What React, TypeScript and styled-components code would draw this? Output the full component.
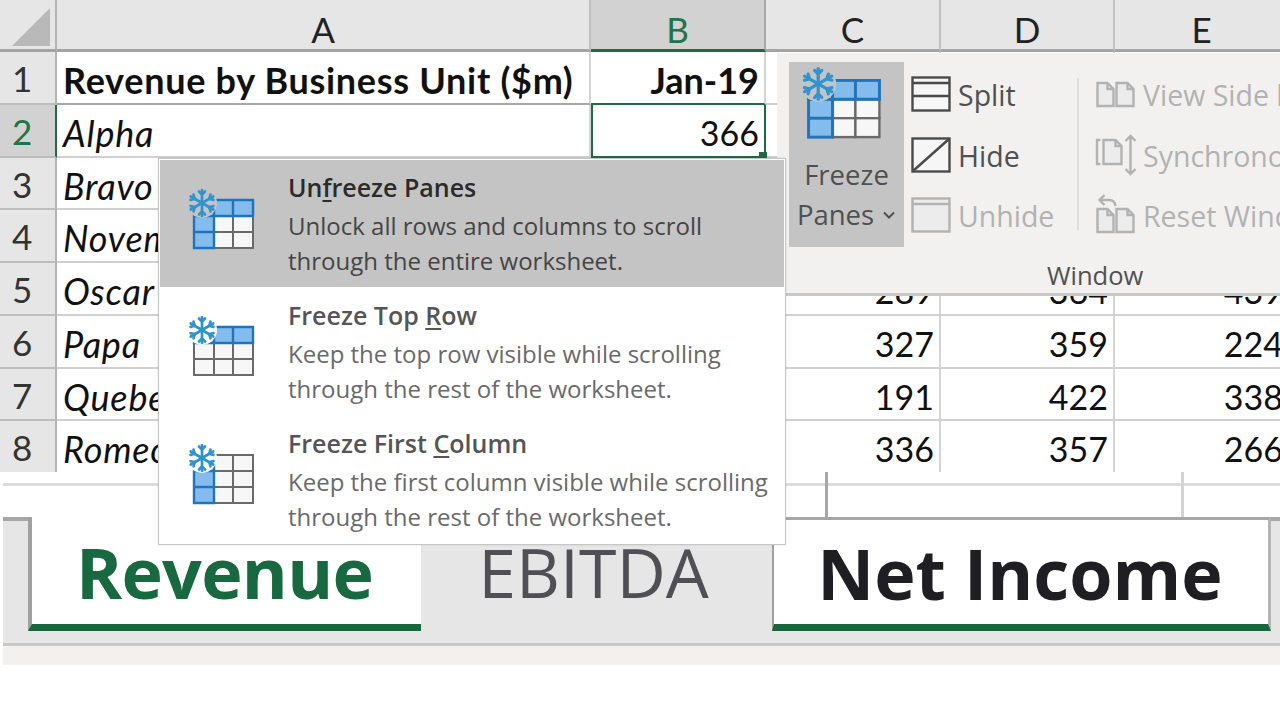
import React from "react";
import styled, { createGlobalStyle } from "styled-components";

const Global = createGlobalStyle`
  html, body { margin: 0; padding: 0; background: #fff; overflow: hidden; }
  body { width: 1280px; height: 720px; position: relative; font-family: Lato, "Liberation Sans", sans-serif; }
  * { box-sizing: border-box; }
`;

const Page = styled.div`
  position: relative;
  width: 1280px;
  height: 720px;
  overflow: hidden;
  background: #fff;
`;

const Sheet = styled.div`
  display: grid;
  grid-template-columns: 57px 534px 175px 175px 174px 175px;
  grid-template-rows: 52px 53px 53px 52px 53px 53px 53px 52px 54px;
  width: 1290px;
  height: 472px;
  overflow: hidden;
  font-family: Lato, "Liberation Sans", sans-serif;
`;

const Corner = styled.div`
  background: #e6e6e6;
  border-right: 2px solid #b4b4b4;
  border-bottom: 3px solid #a3a3a3;
  display: flex;
  align-items: flex-start;
  justify-content: flex-end;
  padding: 8px 5px 0 0;
`;

const ColHead = styled.div<{ $active?: boolean }>`
  background: ${(p) => (p.$active ? "#d2d2d2" : "#e6e6e6")};
  color: ${(p) => (p.$active ? "#20744a" : "#222")};
  border-right: 2px solid ${(p) => (p.$active ? "#a8a8a8" : "#c0c0c0")};
  border-bottom: 3px solid ${(p) => (p.$active ? "#1d6b41" : "#a3a3a3")};
  font-size: 35px;
  line-height: 58px;
  text-align: center;
`;

const RowHead = styled.div<{ $active?: boolean }>`
  background: ${(p) => (p.$active ? "#d2d2d2" : "#e6e6e6")};
  color: ${(p) => (p.$active ? "#20744a" : "#333")};
  border-right: 2px solid ${(p) => (p.$active ? "#1d6b41" : "#b4b4b4")};
  border-bottom: 2px solid #bdbdbd;
  font-size: 35px;
  line-height: 52px;
  padding-left: 12px;
`;

const Cell = styled.div<{ $right?: boolean; $bold?: boolean; $italic?: boolean; $line?: string }>`
  background: #fff;
  color: #111;
  border-right: 2px solid #d4d4d4;
  border-bottom: 2px solid ${(p) => p.$line || "#d0d0d0"};
  font-size: ${(p) => (p.$bold || p.$italic ? 36 : 34)}px;
  line-height: ${(p) => (p.$bold || p.$italic ? 57 : 55)}px;
  font-weight: ${(p) => (p.$bold ? 700 : 400)};
  font-style: ${(p) => (p.$italic ? "italic" : "normal")};
  letter-spacing: ${(p) => (p.$italic ? "0.8px" : p.$bold && !p.$right ? "0.7px" : "0")};
  text-align: ${(p) => (p.$right ? "right" : "left")};
  padding: 0 5px 0 6px;
  white-space: nowrap;
  overflow: hidden;
`;

const SelectedCell = styled(Cell)`
  position: relative;
  overflow: visible;
  border: 2px solid #1d6b41;
  border-top: none;
  padding-right: 5px;
`;

const FillHandle = styled.span`
  position: absolute;
  right: -3px;
  bottom: -2px;
  width: 8px;
  height: 6px;
  background: #1d6b41;
`;

const Strip = styled.div`
  margin-left: 3px;
  width: 1277px;
  background: #fff;
`;

const GhostCells = styled.div`
  display: grid;
  grid-template-columns: 825px 356px 1fr;
  height: 45px;
  background: linear-gradient(#fff 0 11px, #dcdcdc 11px 14px, #fff 14px);
`;

const GhostCell = styled.div<{ $dark?: boolean }>`
  border-right: 3px solid ${(p) => (p.$dark ? "#a6a6a6" : "#d4d4d4")};
  &:last-child { border-right: none; }
`;

const TabRow = styled.div`
  display: flex;
  height: 114px;
  background: #e6e6e6;
`;

const TabGap = styled.div<{ $w: number; $top?: boolean }>`
  width: ${(p) => p.$w}px;
  flex: none;
  border-top: ${(p) => (p.$top ? "4px solid #a6a6a6" : "none")};
`;

const Tab = styled.div<{ $w: number; $left?: number; $topLine?: boolean; $right?: boolean; $tone: string; $bold?: boolean; $plain?: boolean; $track?: number }>`
  width: ${(p) => p.$w}px;
  flex: none;
  display: flex;
  align-items: center;
  justify-content: center;
  background: ${(p) => (p.$plain ? "#e6e6e6" : "#fff")};
  border-left: ${(p) => (p.$left ? `${p.$left}px solid #a0a0a0` : "none")};
  border-right: ${(p) => (p.$right ? "3px solid #b4b4b4" : "none")};
  border-top: ${(p) => (p.$topLine ? "3px solid #a6a6a6" : "none")};
  border-bottom: 7px solid ${(p) => (p.$plain ? "#e6e6e6" : "#17663d")};
  color: ${(p) => p.$tone};
  font-family: "Open Sans", "Noto Sans", sans-serif;
  font-size: ${(p) => (p.$plain ? 68 : 70)}px;
  font-weight: ${(p) => (p.$bold ? 700 : 400)};
  letter-spacing: ${(p) => p.$track || 0}px;
  line-height: 1;
  white-space: nowrap;
`;

const TabLabel = styled.span<{ $shift: number }>`
  filter: blur(0.6px);
  transform: translate(${(p) => p.$shift}px, 1px);
`;

const StripFoot = styled.div`
  height: 34px;
  background: #f2f1f0;
  border-top: 12px solid #e6e6e6;
  box-shadow: inset 0 3px 0 #c8c8c8;
`;

const Ribbon = styled.div`
  position: absolute;
  left: 777px;
  top: 53px;
  width: 636px;
  height: 243px;
  background: #f2f1f0;
  border-bottom: 3px solid #c8c8c8;
  padding: 9px 0 0 12px;
  font-family: "Open Sans", "Noto Sans", sans-serif;
  color: #505050;
`;

const RibbonBody = styled.div`
  display: flex;
  height: 185px;
`;

const BigButton = styled.div`
  width: 115px;
  height: 185px;
  flex: none;
  background: #c4c4c4;
  display: flex;
  flex-direction: column;
  align-items: center;
  padding-top: 3px;
  font-size: 27.5px;
  line-height: 40px;
  color: #505050;
`;

const BigIconSlot = styled.div`
  height: 90px;
  width: 100%;
  padding-left: 10px;
`;

const BigLine = styled.div`
  display: flex;
  align-items: center;
  gap: 8px;
  white-space: nowrap;
`;

const SmallColumn = styled.div<{ $wide?: boolean }>`
  display: flex;
  flex-direction: column;
  margin-left: ${(p) => (p.$wide ? 0 : 7)}px;
  padding-top: 12px;
  width: ${(p) => (p.$wide ? 420 : 175)}px;
  flex: none;
`;

const SmallRow = styled.div<{ $off?: boolean }>`
  height: 60.5px;
  flex: none;
  display: flex;
  align-items: flex-start;
  gap: 7px;
  font-size: 28.5px;
  line-height: 42px;
  white-space: nowrap;
  color: ${(p) => (p.$off ? "#b2b2b2" : "#505050")};
  svg { flex: none; }
`;

const RibbonSep = styled.div`
  width: 2px;
  height: 152px;
  margin: 16px 16px 0 -9px;
  background: #dfdfdf;
  flex: none;
`;

const GroupLabel = styled.div`
  margin: 9px 0 0 0;
  padding-left: 258px;
  font-size: 25.5px;
  line-height: 38px;
  color: #505050;
`;

const Menu = styled.div`
  position: absolute;
  left: 158px;
  top: 158px;
  width: 628px;
  height: 387px;
  background: #fff;
  border: 1px solid #c6c6c6;
  padding: 1px;
  box-shadow: 0 0 2px rgba(0, 0, 0, 0.12);
  font-family: "Open Sans", "Noto Sans", sans-serif;
`;

const MenuItem = styled.div<{ $hot?: boolean }>`
  height: ${(p) => (p.$hot ? 127 : 128)}px;
  display: flex;
  background: ${(p) => (p.$hot ? "#c4c4c4" : "transparent")};
`;

const MenuIcon = styled.div`
  width: 128px;
  flex: none;
  padding: 27px 0 0 26px;
`;

const MenuText = styled.div<{ $hot?: boolean }>`
  padding-top: ${(p) => (p.$hot ? 10 : 11)}px;
`;

const MenuTitle = styled.div<{ $hot?: boolean }>`
  font-size: 25px;
  line-height: 35px;
  font-weight: 600;
  color: ${(p) => (p.$hot ? "#2b2b2b" : "#555")};
  white-space: nowrap;
  u { text-underline-offset: 3px; text-decoration-thickness: 2px; }
`;

const MenuDesc = styled.div<{ $hot?: boolean }>`
  font-size: 24px;
  line-height: 35px;
  margin-top: 3px;
  color: ${(p) => (p.$hot ? "#454545" : "#6a6a6a")};
  white-space: nowrap;
`;

const Snow: React.FC<{ halo: string }> = ({ halo }) => (
  <g>
    <circle cx="16" cy="16" r="15" fill={halo} />
    {[0, 60, 120, 180, 240, 300].map((a) => (
      <g key={a} transform={`rotate(${a} 16 16)`} stroke="#2f94d0" strokeWidth="2.7" fill="none" strokeLinecap="round">
        <path d="M16 16V3" />
        <path d="M13 4.5L16 7.6L19 4.5" />
      </g>
    ))}
  </g>
);

const Freeze: React.FC<{ mode: "both" | "top" | "left"; halo: string; w?: number; h?: number }> = ({ mode, halo, w = 70, h = 66 }) => {
  const xs = [8, 28, 47, 67];
  const ys = [13, 29, 45, 61];
  const blue = (c: number, r: number) =>
    (mode !== "left" && r === 0) || (mode !== "top" && c === 0);
  const cells: React.ReactNode[] = [];
  for (let r = 0; r < 3; r++)
    for (let c = 0; c < 3; c++)
      cells.push(
        <rect key={`${r}${c}`} x={xs[c]} y={ys[r]} width={xs[c + 1] - xs[c]} height={ys[r + 1] - ys[r]} fill={blue(c, r) ? "#84bdec" : "#f7f7f7"} stroke="#6a6a6a" strokeWidth="2" />
      );
  const blueLines: string[] = [];
  if (mode !== "left") blueLines.push("M8 13H67V29H8Z", "M28 13V29M47 13V29");
  if (mode !== "top") blueLines.push("M8 13H28V61H8Z", "M8 29H28M8 45H28");
  return (
    <svg width={w} height={h} viewBox="0 0 70 66" preserveAspectRatio="none">
      {cells}
      <path d={blueLines.join(" ")} fill="none" stroke="#1f74bd" strokeWidth="2.4" />
      <Snow halo={halo} />
    </svg>
  );
};

const SplitIcon = () => (
  <svg width="40" height="36" viewBox="0 0 40 36" fill="#f6f6f6" stroke="#4a4a4a" strokeWidth="2.4" style={{ marginTop: 2 }}>
    <rect x="1.5" y="1.5" width="37" height="33" />
    <path d="M1.5 7H38.5M1.5 20H38.5" />
  </svg>
);

const HideIcon = () => (
  <svg width="40" height="36" viewBox="0 0 40 36" fill="#f6f6f6" stroke="#4a4a4a" strokeWidth="2.4" style={{ marginTop: 2 }}>
    <rect x="1.5" y="1.5" width="37" height="33" />
    <path d="M2 34L38 2" />
  </svg>
);

const UnhideIcon = () => (
  <svg width="40" height="36" viewBox="0 0 40 36" fill="#ececec" stroke="#b2b2b2" strokeWidth="2.4" style={{ marginTop: 2 }}>
    <rect x="1.5" y="1.5" width="37" height="33" />
    <path d="M1.5 7H38.5" />
  </svg>
);

const SideIcon = () => (
  <svg width="41" height="29" viewBox="0 0 40 29" fill="#ececec" stroke="#b2b2b2" strokeWidth="2.4" style={{ marginTop: 6 }}>
    <path d="M2 3H12L18 9V26H2Z M12 3V9H18 M21 3H32L38 9V26H21Z M32 3V9H38" />
  </svg>
);

const SyncIcon = () => (
  <svg width="41" height="42" viewBox="0 0 40 42" fill="none" stroke="#b2b2b2" strokeWidth="2.4" style={{ marginTop: -1 }}>
    <path d="M5 6H1.5V30H5" />
    <path d="M8 6H20L26 12V30H8Z M20 6V12H26" fill="#ececec" />
    <path d="M35 2V40M30 7L35 2L40 7M30 35L35 40L40 35" />
  </svg>
);

const ResetIcon = () => (
  <svg width="41" height="42" viewBox="0 0 40 42" fill="#ececec" stroke="#b2b2b2" strokeWidth="2.4" style={{ marginTop: -2 }}>
    <path d="M2 16H12L18 22V39H2Z M12 16V22H18 M21 16H32L38 22V39H21Z M32 16V22H38" />
    <path d="M4 7H14Q19 7 20 13M9 2L4 7L9 12" fill="none" />
  </svg>
);

const Triangle = () => (
  <svg width="38" height="38" viewBox="0 0 38 38">
    <path d="M0 38L38 0V38Z" fill="#b9b9b9" />
  </svg>
);

const rows: [string, string?, string?, string?][] = [
  ["Bravo"],
  ["November"],
  ["Oscar", "289", "364", "439"],
  ["Papa", "327", "359", "224"],
  ["Quebec", "191", "422", "338"],
  ["Romeo", "336", "357", "266"],
];

export default function App() {
  return (
    <Page>
      <Global />
      <Sheet>
        <Corner><Triangle /></Corner>
        <ColHead>A</ColHead>
        <ColHead $active>B</ColHead>
        <ColHead>C</ColHead>
        <ColHead>D</ColHead>
        <ColHead>E</ColHead>

        <RowHead>1</RowHead>
        <Cell $bold $line="#a8a8a8">Revenue by Business Unit ($m)</Cell>
        <Cell $bold $right $line="#1d6b41">Jan-19</Cell>
        <Cell /><Cell /><Cell />

        <RowHead $active>2</RowHead>
        <Cell $italic>Alpha</Cell>
        <SelectedCell $right>366<FillHandle /></SelectedCell>
        <Cell /><Cell /><Cell />

        {rows.map(([name, c, d, e], i) => (
          <React.Fragment key={name}>
            <RowHead>{i + 3}</RowHead>
            <Cell $italic>{name}</Cell>
            <Cell $right />
            <Cell $right>{c}</Cell>
            <Cell $right>{d}</Cell>
            <Cell $right>{e}</Cell>
          </React.Fragment>
        ))}
      </Sheet>

      <Strip>
        <GhostCells>
          <GhostCell $dark />
          <GhostCell />
          <GhostCell />
        </GhostCells>
        <TabRow>
          <TabGap $w={25} $top />
          <Tab $w={393} $left={4} $tone="#17693f" $bold $track={-0.7}><TabLabel $shift={-2}>Revenue</TabLabel></Tab>
          <Tab $w={351} $plain $tone="#4f4f55"><TabLabel $shift={-3}>EBITDA</TabLabel></Tab>
          <Tab $w={499} $left={2} $topLine $right $tone="#1f1f23" $bold><TabLabel $shift={-1}>Net Income</TabLabel></Tab>
          <TabGap $w={9} $top />
        </TabRow>
        <StripFoot />
      </Strip>

      <Ribbon>
        <RibbonBody>
          <BigButton>
            <BigIconSlot><Freeze mode="both" halo="#c4c4c4" w={84} h={78} /></BigIconSlot>
            <BigLine>Freeze</BigLine>
            <BigLine>
              Panes
              <svg width="14" height="9" viewBox="0 0 14 9" fill="none" stroke="#505050" strokeWidth="2">
                <path d="M2 1.5L7 6.5L12 1.5" />
              </svg>
            </BigLine>
          </BigButton>
          <SmallColumn>
            <SmallRow><SplitIcon />Split</SmallRow>
            <SmallRow><HideIcon />Hide</SmallRow>
            <SmallRow $off><UnhideIcon />Unhide</SmallRow>
          </SmallColumn>
          <RibbonSep />
          <SmallColumn $wide>
            <SmallRow $off><SideIcon />View Side by Side</SmallRow>
            <SmallRow $off><SyncIcon />Synchronous Scrolling</SmallRow>
            <SmallRow $off><ResetIcon />Reset Window Position</SmallRow>
          </SmallColumn>
        </RibbonBody>
        <GroupLabel>Window</GroupLabel>
      </Ribbon>

      <Menu>
        <MenuItem $hot>
          <MenuIcon><Freeze mode="both" halo="#c4c4c4" /></MenuIcon>
          <MenuText $hot>
            <MenuTitle $hot>Un<u>f</u>reeze Panes</MenuTitle>
            <MenuDesc $hot>Unlock all rows and columns to scroll<br />through the entire worksheet.</MenuDesc>
          </MenuText>
        </MenuItem>
        <MenuItem>
          <MenuIcon><Freeze mode="top" halo="#fff" /></MenuIcon>
          <MenuText>
            <MenuTitle>Freeze Top <u>R</u>ow</MenuTitle>
            <MenuDesc>Keep the top row visible while scrolling<br />through the rest of the worksheet.</MenuDesc>
          </MenuText>
        </MenuItem>
        <MenuItem>
          <MenuIcon><Freeze mode="left" halo="#fff" /></MenuIcon>
          <MenuText>
            <MenuTitle>Freeze First <u>C</u>olumn</MenuTitle>
            <MenuDesc>Keep the first column visible while scrolling<br />through the rest of the worksheet.</MenuDesc>
          </MenuText>
        </MenuItem>
      </Menu>
    </Page>
  );
}
